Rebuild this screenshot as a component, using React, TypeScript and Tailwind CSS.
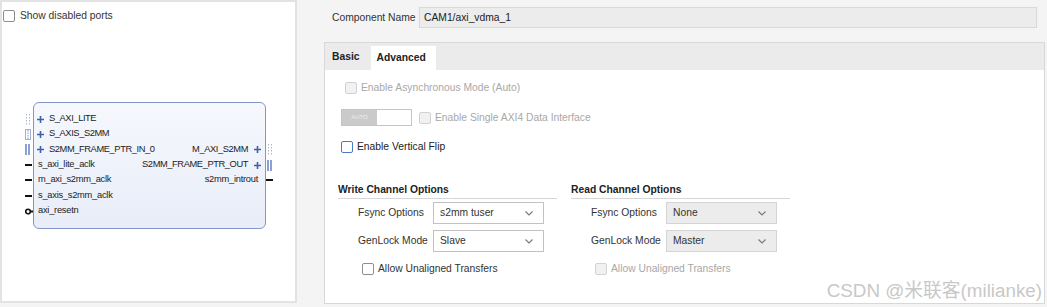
import React from 'react'

type PinKind = 'grip' | 'gripBox' | 'bars' | 'line' | 'reset' | 'none'

function Plus() {
  return (
    <svg width="7" height="7" viewBox="0 0 7 7" className="shrink-0">
      <path d="M3.5 0V7M0 3.5H7" stroke="#3f5fa8" strokeWidth="1.6" />
    </svg>
  )
}

function Pin({ kind }: { kind: PinKind }) {
  if (kind === 'line') return <div className="h-[2px] w-[7px] bg-[#111]" />
  if (kind === 'bars')
    return (
      <svg width="6" height="11" viewBox="0 0 6 11">
        <path d="M1 0V11M4 0V11" stroke="#4f6fb8" strokeWidth="1.3" />
      </svg>
    )
  if (kind === 'grip')
    return (
      <svg width="6" height="11" viewBox="0 0 6 11">
        <path d="M1.5 0V11M4.5 0V11" stroke="#a9b6d2" strokeWidth="1" strokeDasharray="1.5 1.5" />
      </svg>
    )
  if (kind === 'gripBox')
    return (
      <svg width="6" height="11" viewBox="0 0 6 11">
        <rect x="0.5" y="0.5" width="5" height="10" fill="none" stroke="#9fb0d4" strokeWidth="1" />
        <path d="M3 1V10" stroke="#7f93c2" strokeWidth="1" strokeDasharray="1.5 1" />
      </svg>
    )
  if (kind === 'reset')
    return (
      <svg width="8" height="7" viewBox="0 0 8 7">
        <circle cx="3" cy="3.5" r="2.3" fill="white" stroke="#111" strokeWidth="1.6" />
        <path d="M5.3 3.5H8" stroke="#111" strokeWidth="2" />
      </svg>
    )
  return null
}

interface PortRow {
  left: string
  leftBus: boolean
  leftPin: PinKind
  right?: string
  rightBus?: boolean
  rightPin?: PinKind
}

const rows: PortRow[] = [
  { left: 'S_AXI_LITE', leftBus: true, leftPin: 'grip' },
  { left: 'S_AXIS_S2MM', leftBus: true, leftPin: 'gripBox' },
  { left: 'S2MM_FRAME_PTR_IN_0', leftBus: true, leftPin: 'bars', right: 'M_AXI_S2MM', rightBus: true, rightPin: 'grip' },
  { left: 's_axi_lite_aclk', leftBus: false, leftPin: 'line', right: 'S2MM_FRAME_PTR_OUT', rightBus: true, rightPin: 'bars' },
  { left: 'm_axi_s2mm_aclk', leftBus: false, leftPin: 'line', right: 's2mm_introut', rightBus: false, rightPin: 'line' },
  { left: 's_axis_s2mm_aclk', leftBus: false, leftPin: 'line' },
  { left: 'axi_resetn', leftBus: false, leftPin: 'reset' },
]

function Check({ state }: { state: 'normal' | 'disabled' | 'focus' }) {
  const cls =
    state === 'disabled'
      ? 'border-[#d2d2d2] bg-[#f1f1f1]'
      : state === 'focus'
        ? 'border-[#4b78c9] border-[1.5px] bg-white'
        : 'border-[#8e8e8e] bg-white'
  return <span className={`inline-block w-[12px] h-[12px] rounded-[2px] border shrink-0 ${cls}`} />
}

function Chevron() {
  return (
    <svg width="8" height="5" viewBox="0 0 8 5">
      <path d="M0.5 0.5L4 4L7.5 0.5" fill="none" stroke="#777" strokeWidth="1.1" />
    </svg>
  )
}

function Select({ value, disabled }: { value: string; disabled?: boolean }) {
  return (
    <div
      className={`w-[111px] h-[22px] flex items-center justify-between pl-[6px] pr-[10px] border ${
        disabled ? 'bg-[#ececec] border-[#d4d4d4]' : 'bg-white border-[#c2c2c2]'
      }`}
    >
      <span className="text-[#333]">{value}</span>
      <Chevron />
    </div>
  )
}

function ChannelColumn({
  title,
  fsync,
  genlock,
  disabled,
}: {
  title: string
  fsync: string
  genlock: string
  disabled?: boolean
}) {
  return (
    <div className="w-[219px]">
      <div className="font-bold text-[#222] pb-[1px] border-b border-[#d6d6d6] leading-[14px]">{title}</div>
      <div className="pl-[20px] mt-[3px] flex flex-col gap-[6px]">
        <div className="flex items-center">
          <span className="w-[75px] whitespace-nowrap">Fsync Options</span>
          <Select value={fsync} disabled={disabled} />
        </div>
        <div className="flex items-center">
          <span className="w-[75px] whitespace-nowrap">GenLock Mode</span>
          <Select value={genlock} disabled={disabled} />
        </div>
      </div>
      <div className="pl-[24px] mt-[9px] h-[16px] flex items-center gap-[4px]">
        <Check state={disabled ? 'disabled' : 'normal'} />
        <span className={disabled ? 'text-[#a8a8a8]' : ''}>Allow Unaligned Transfers</span>
      </div>
    </div>
  )
}

export default function App() {
  return (
    <div className="relative w-[1047px] h-[307px] bg-[#f4f4f4] flex overflow-hidden font-['Liberation_Sans','Noto_Sans_CJK_SC',sans-serif] text-[10.3px] text-[#333]">
      {/* left: block diagram */}
      <div className="w-[297px] h-[303px] bg-white border-2 border-[#e3e3e3] shrink-0">
        <div className="flex items-center gap-[5px] pl-[1px] pt-[6px]">
          <Check state="normal" />
          <span>Show disabled ports</span>
        </div>
        <div className="ml-[31px] mt-[79px] w-[233px] rounded-[6px] border border-[#8296c8] bg-gradient-to-b from-[#f6f8fd] to-[#e8edf8] pt-[8px] pb-[9px] text-[9.3px] text-[#222]">
          {rows.map((r) => (
            <div key={r.left} className="flex items-center h-[15.33px]">
              <div className="-ml-[9px] w-[9px] flex items-center justify-start">
                <Pin kind={r.leftPin} />
              </div>
              {r.leftBus ? (
                <div className="flex items-center ml-[3px] gap-[5px]">
                  <Plus />
                  <span className="tracking-[-0.4px]">{r.left}</span>
                </div>
              ) : (
                <span className="ml-[4px] tracking-[-0.25px]">{r.left}</span>
              )}
              <div className="flex-1" />
              {r.right &&
                (r.rightBus ? (
                  <div className="flex items-center gap-[6px] mr-[4px]">
                    <span className="tracking-[-0.4px]">{r.right}</span>
                    <Plus />
                  </div>
                ) : (
                  <span className="mr-[7px] tracking-[-0.25px]">{r.right}</span>
                ))}
              <div className="-mr-[8px] w-[8px] flex items-center justify-end">
                {r.rightPin && <Pin kind={r.rightPin} />}
              </div>
            </div>
          ))}
        </div>
      </div>

      {/* right: customization */}
      <div className="flex-1 pl-[27px] flex flex-col">
        <div className="flex items-center mt-[7px] ml-[8px] mr-[10px]">
          <span className="w-[87px] whitespace-nowrap">Component Name</span>
          <div className="flex-1 h-[21px] bg-[#ececec] border border-[#d9d9d9] flex items-center pl-[4px] text-[#222]">
            CAM1/axi_vdma_1
          </div>
        </div>

        <div className="mt-[14px] w-[721px] h-[262px] border border-[#d8d8d8] bg-white flex flex-col">
          <div className="h-[27px] bg-[#ebebeb] flex items-end shrink-0">
            <div className="h-[27px] flex items-center pl-[7px] pr-[12px] font-bold text-[#222]">Basic</div>
            <div className="h-[24px] w-[65px] bg-white flex items-center pl-[5px] font-bold text-[#222]">Advanced</div>
          </div>

          <div className="flex flex-col">
            <div className="mt-[10px] ml-[20px] h-[16px] flex items-center gap-[4px] text-[#a8a8a8]">
              <Check state="disabled" />
              <span>Enable Asynchronous Mode (Auto)</span>
            </div>

            <div className="mt-[13px] ml-[16px] flex items-center">
              <div className="w-[71px] h-[17px] border border-[#c4c4c4] flex">
                <div className="w-[35px] bg-[#cacaca] flex items-center justify-center text-[6px] text-[#eeeeee]">
                  AUTO
                </div>
                <div className="flex-1 bg-white" />
              </div>
              <div className="ml-[7px] flex items-center gap-[4px] text-[#a8a8a8]">
                <Check state="disabled" />
                <span>Enable Single AXI4 Data Interface</span>
              </div>
            </div>

            <div className="mt-[13px] ml-[16px] h-[16px] flex items-center gap-[4px] text-[#222]">
              <Check state="focus" />
              <span>Enable Vertical Flip</span>
            </div>

            <div className="mt-[28px] ml-[13px] flex gap-[14px]">
              <ChannelColumn title="Write Channel Options" fsync="s2mm tuser" genlock="Slave" />
              <ChannelColumn title="Read Channel Options" fsync="None" genlock="Master" disabled />
            </div>
          </div>
        </div>
      </div>

      <div className="absolute right-[5px] bottom-[6px] text-[18.8px] leading-[20px] text-[#c8c8c8]">
        CSDN @米联客(milianke)
      </div>
    </div>
  )
}
